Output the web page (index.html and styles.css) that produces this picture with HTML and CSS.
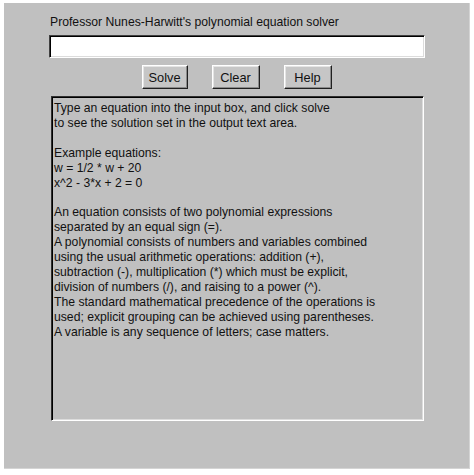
FILE: index.html
```html
<!DOCTYPE html>
<html>
<head>
<meta charset="utf-8">
<title>Polynomial equation solver</title>
<link rel="stylesheet" href="styles.css">
</head>
<body>
<div class="panel">
  <div class="content">
    <div class="title">Professor Nunes-Harwitt's polynomial equation solver</div>
    <input class="equation" type="text" value="">
    <div class="buttons">
      <button class="btn btn-solve">Solve</button>
      <button class="btn">Clear</button>
      <button class="btn">Help</button>
    </div>
    <textarea class="output" readonly>Type an equation into the input box, and click solve
to see the solution set in the output text area.

Example equations:
w = 1/2 * w + 20
x^2 - 3*x + 2 = 0

An equation consists of two polynomial expressions
separated by an equal sign (=).
A polynomial consists of numbers and variables combined
using the usual arithmetic operations: addition (+),
subtraction (-), multiplication (*) which must be explicit,
division of numbers (/), and raising to a power (^).
The standard mathematical precedence of the operations is
used; explicit grouping can be achieved using parentheses.
A variable is any sequence of letters; case matters.</textarea>
  </div>
</div>
</body>
</html>
```

FILE: styles.css
```css
html, body {
  margin: 0;
  padding: 0;
  background: #ffffff;
}

body {
  font-family: "Liberation Sans", Arial, sans-serif;
  font-size: 12.2px;
  color: #111;
}

.panel {
  box-sizing: border-box;
  width: 466px;
  height: 466px;
  margin: 3px 0 0 4px;
  background: #c0c0c0;
  border-right: 1px solid #d4d4d4;
  border-bottom: 1px solid #d4d4d4;
  padding-top: 12px;
}

.content {
  width: 376px;
  margin: 0 0 0 45px;
  display: flex;
  flex-direction: column;
}

.title {
  line-height: 15px;
  height: 15px;
  padding-left: 1px;
  margin-bottom: 5px;
}

.equation {
  box-sizing: border-box;
  width: 376px;
  height: 23px;
  margin: 0;
  padding: 2px 4px;
  background: #ffffff;
  border: 1px solid;
  border-color: #404040 #ffffff #ffffff #404040;
  box-shadow: inset 1px 1px #000000, inset -1px -1px #dcdcdc;
  font: inherit;
  outline: none;
}

.buttons {
  display: flex;
  justify-content: center;
  gap: 24px;
  margin-top: 7px;
  padding-right: 1px;
}

.btn {
  box-sizing: border-box;
  width: 48px;
  height: 24px;
  margin: 0;
  padding: 0;
  background: #c6c6c6;
  border: 1px solid;
  border-color: #ffffff #202020 #202020 #ffffff;
  box-shadow: inset -1px -1px #8a8a8a, inset 1px 1px #e4e4e4;
  font-family: "Liberation Sans", Arial, sans-serif;
  font-size: 12.8px;
  color: #111;
}

.btn-solve {
  width: 46px;
}

.output {
  box-sizing: border-box;
  display: block;
  width: 373px;
  height: 325px;
  margin: 7px 0 0 2px;
  padding: 4px 2px 3px 2px;
  background: #c0c0c0;
  border: 1px solid;
  border-color: #303030 #ffffff #ffffff #303030;
  box-shadow: inset 1px 1px #000000, inset -1px -1px #dcdcdc;
  font-family: "Liberation Sans", Arial, sans-serif;
  font-size: 12.2px;
  line-height: 14.9px;
  color: #111;
  resize: none;
  overflow: hidden;
  white-space: pre;
  outline: none;
}
```
